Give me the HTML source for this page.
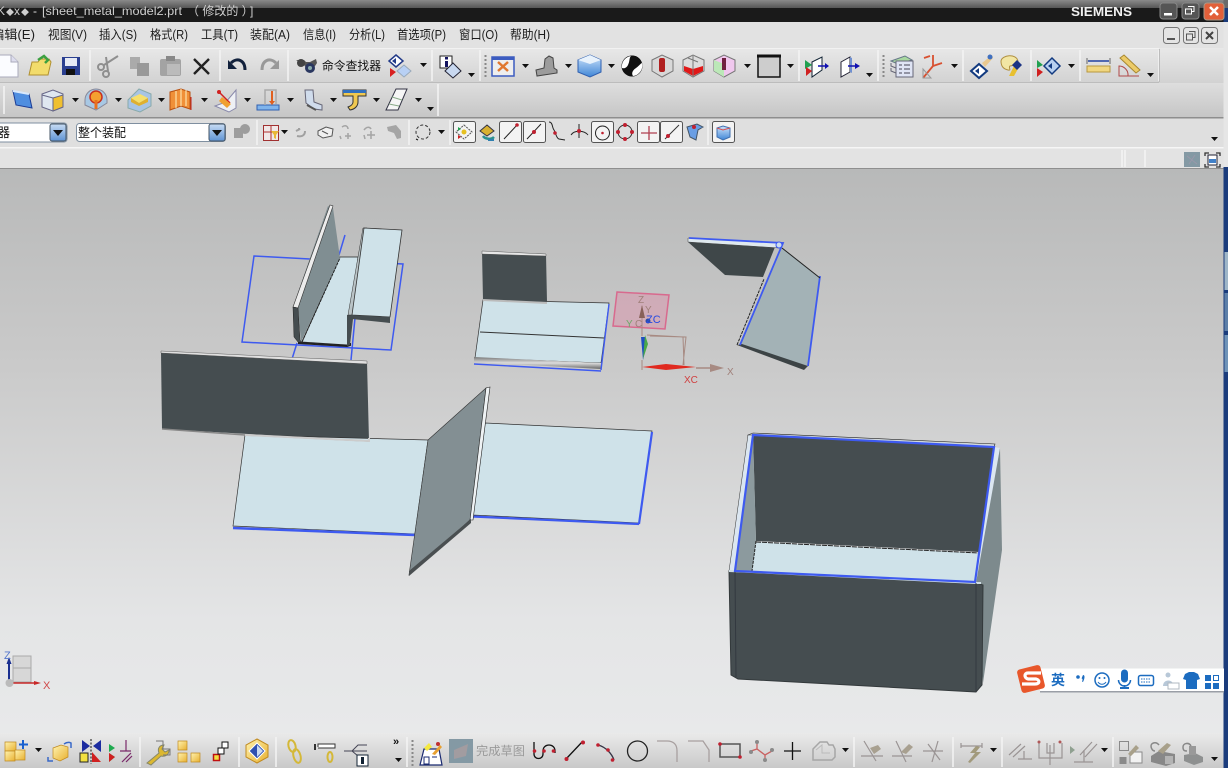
<!DOCTYPE html>
<html><head><meta charset="utf-8"><title>sheet_metal_model2.prt</title>
<style>
html,body{margin:0;padding:0;background:#ddd;overflow:hidden}
svg{display:block}
text{font-family:"Liberation Sans","Noto Sans CJK SC",sans-serif}
</style></head><body>
<svg xmlns="http://www.w3.org/2000/svg" width="1228" height="768" viewBox="0 0 1228 768">
<defs>
<linearGradient id="vp" x1="0" y1="0" x2="0" y2="1"><stop offset="0" stop-color="#b8b9b9"/><stop offset=".35" stop-color="#cacaca"/><stop offset=".8" stop-color="#e4e5e6"/><stop offset="1" stop-color="#e8e9ea"/></linearGradient>
<linearGradient id="tb" x1="0" y1="0" x2="0" y2="1"><stop offset="0" stop-color="#e8e8e8"/><stop offset="1" stop-color="#d2d2d2"/></linearGradient>
<linearGradient id="tb2" x1="0" y1="0" x2="0" y2="1"><stop offset="0" stop-color="#dedede"/><stop offset="1" stop-color="#c6c6c6"/></linearGradient>
<linearGradient id="top" x1="0" y1="0" x2="0" y2="1"><stop offset="0" stop-color="#8a8a8a"/><stop offset="1" stop-color="#565656"/></linearGradient>
<linearGradient id="bot" x1="0" y1="0" x2="0" y2="1"><stop offset="0" stop-color="#eaeaea"/><stop offset="1" stop-color="#c9c9c9"/></linearGradient>
<linearGradient id="blu" x1="0" y1="0" x2="0" y2="1"><stop offset="0" stop-color="#cfe4fb"/><stop offset="1" stop-color="#3f86d6"/></linearGradient>
<linearGradient id="yel" x1="0" y1="0" x2="1" y2="1"><stop offset="0" stop-color="#fff3b0"/><stop offset="1" stop-color="#e8b030"/></linearGradient>
<linearGradient id="band" x1="0" y1="0" x2="0" y2="1"><stop offset="0" stop-color="#777"/><stop offset=".5" stop-color="#ddd"/><stop offset="1" stop-color="#666"/></linearGradient>
<linearGradient id="dd" x1="0" y1="0" x2="0" y2="1"><stop offset="0" stop-color="#c8dcf4"/><stop offset="1" stop-color="#5f94d4"/></linearGradient>
<path id="a" d="M0 0h7l-3.5 4z" fill="#111"/>
<g id="btn"><rect x=".5" y=".5" width="22" height="21" rx="2" fill="#f3f3f3" stroke="#555"/></g>
</defs>

<!-- chrome backgrounds -->
<rect width="1228" height="768" fill="#e2e2e2"/>
<rect y="0" width="1228" height="8" fill="url(#top)"/>
<rect y="8" width="1228" height="14" fill="#1a1a1a"/>
<rect y="22" width="1228" height="26" fill="#e2e2e2"/>
<rect y="48" width="1228" height="35" fill="url(#tb)"/>
<rect y="83" width="1228" height="34" fill="url(#tb2)"/>
<rect y="117" width="1228" height="1.5" fill="#8e8e8e"/>
<rect y="118.500" width="1228" height="29" fill="#dfdfdf"/>
<rect y="147" width="1228" height="1.500" fill="#f6f6f6"/>
<rect y="148.500" width="1228" height="20" fill="#e3e3e3"/>
<rect y="168" width="1228" height="1.500" fill="#8f8f8f"/>
<rect y="169" width="1228" height="564" fill="url(#vp)"/>
<rect y="733" width="1228" height="35" fill="url(#bot)"/>
<!-- right desktop strip -->
<rect x="1223.500" y="0" width="4.500" height="768" fill="#1b3c7c"/>
<rect x="1223.500" y="0" width="4.500" height="8" fill="#6a6a6a"/>
<rect x="1223.500" y="22" width="4.500" height="145" fill="#e6e6e6"/>
<rect x="1224.500" y="252" width="3.500" height="38" fill="#9fb6c8"/>
<rect x="1224.500" y="293" width="3.500" height="38" fill="#5d7fa8"/>
<rect x="1224.500" y="335" width="3.500" height="37" fill="#6f93b8"/>

<!-- title -->
<g fill="#cfcfcf" font-size="12">
<text x="-3" y="15">K</text><text x="6" y="15" font-size="8">◆</text><text x="14" y="15">x</text><text x="21" y="15" font-size="8">◆</text>
<text x="33" y="15" fill="#e0e0e0">-</text>
<text x="42" y="15" textLength="140" lengthAdjust="spacingAndGlyphs">[sheet_metal_model2.prt</text>
<text x="187" y="15" font-size="12">（ 修改的 ）</text><text x="250" y="15">]</text>
</g>
<text x="1071" y="16" font-size="12.500" font-weight="bold" fill="#f0f0f0" textLength="61" lengthAdjust="spacingAndGlyphs">SIEMENS</text>
<!-- window buttons -->
<rect x="1160" y="3" width="17" height="16" rx="3" fill="#555" stroke="#888"/><rect x="1164" y="13" width="8" height="2.500" fill="#fff"/>
<rect x="1182" y="3" width="17" height="16" rx="3" fill="#555" stroke="#888"/><path d="M1188 6.500h6v5h-2M1185.500 9h6v5h-6z" fill="none" stroke="#fff"/>
<rect x="1204" y="3" width="20" height="17" rx="3" fill="#e2603a" stroke="#a98"/><path d="M1210 7l8 8M1218 7l-8 8" stroke="#fff" stroke-width="2.500"/>

<!-- menu -->
<g fill="#1c1c1c" font-size="12.500">
<text x="-9" y="39" textLength="44" lengthAdjust="spacingAndGlyphs">编辑(E)</text>
<text x="48" y="39" textLength="39" lengthAdjust="spacingAndGlyphs">视图(V)</text>
<text x="99" y="39" textLength="38" lengthAdjust="spacingAndGlyphs">插入(S)</text>
<text x="150" y="39" textLength="38" lengthAdjust="spacingAndGlyphs">格式(R)</text>
<text x="201" y="39" textLength="37" lengthAdjust="spacingAndGlyphs">工具(T)</text>
<text x="250" y="39" textLength="40" lengthAdjust="spacingAndGlyphs">装配(A)</text>
<text x="303" y="39" textLength="33" lengthAdjust="spacingAndGlyphs">信息(I)</text>
<text x="349" y="39" textLength="36" lengthAdjust="spacingAndGlyphs">分析(L)</text>
<text x="397" y="39" textLength="49" lengthAdjust="spacingAndGlyphs">首选项(P)</text>
<text x="459" y="39" textLength="39" lengthAdjust="spacingAndGlyphs">窗口(O)</text>
<text x="510" y="39" textLength="40" lengthAdjust="spacingAndGlyphs">帮助(H)</text>
</g>
<g fill="#e4e4e4" stroke="#777">
<rect x="1163.500" y="27.500" width="16" height="16" rx="3"/><rect x="1183.500" y="27.500" width="15" height="16" rx="3"/><rect x="1201.500" y="27.500" width="16" height="16" rx="3"/>
</g>
<rect x="1167" y="38" width="8" height="2" fill="#555"/>
<path d="M1189 31.500h6v6h-2M1186.500 34h6v6h-6z" fill="none" stroke="#555"/>
<path d="M1206 32l7 7M1213 32l-7 7" stroke="#444" stroke-width="2"/>

<!-- toolbar separators -->
<g stroke="#f4f4f4" stroke-width="1.500">
<path d="M90 50v31M220 50v31M288 50v31M432 50v31M480 50v31M799 50v31M878 50v31M963 50v31M1031 50v31M1080 50v31M1159 50v31M4 86v28M438 84v32M257 120v25M409 120v25M450 120v25M708 120v25M1122 150v17M1125 150v17M1145 150v17M140 737v30M239 737v30M276 737v30M407 737v30M854 737v30M953 737v30M1002 737v30M1113 737v30"/>
</g>
<rect y="48" width="1159" height="1" fill="#f2f2f2"/><rect y="82" width="1159" height="1" fill="#bcbcbc"/>
<rect x="1159" y="49" width="1" height="33" fill="#bcbcbc"/>
<path d="M485.500 55v22M883.500 55v22M412.500 740v26" stroke="#888" stroke-width="2" stroke-dasharray="2 2"/>

<!-- row 1 icons -->
<path d="M-2 55h13l7 7v15h-20z" fill="#fbfcff" stroke="#aab"/><path d="M11 55v7h7" fill="#dde" stroke="#aab"/>
<path d="M29 75l3-13h6l2-3h9l2 3-3 13z" fill="#f2dc6c" stroke="#b09030"/><path d="M38 60l6-4 4 4-3 3" fill="none" stroke="#3ca040" stroke-width="2.500"/>
<rect x="62" y="57" width="18" height="18" fill="#2a3f90"/><rect x="65" y="58" width="12" height="8" fill="#e6eaf4"/><rect x="66" y="69" width="9" height="6" fill="#111"/>
<g fill="none" stroke="#8f8f8f" stroke-width="2"><circle cx="101" cy="67" r="3"/><circle cx="106" cy="74" r="3"/><path d="M104 65l14-9M108 71l-2-14"/></g>
<path d="M130 57h10v12h-10z" fill="#aaa"/><path d="M137 63h12v13h-12z" fill="#999"/>
<rect x="160" y="59" width="21" height="17" rx="2" fill="#a3a3a3"/><rect x="166" y="56" width="9" height="5" fill="#888"/><rect x="167" y="64" width="13" height="11" fill="#bbb"/>
<path d="M194 59l15 15M209 59l-15 15" stroke="#222" stroke-width="2.400"/>
<path d="M231 63c6-6 14-3 14 7" fill="none" stroke="#12213c" stroke-width="3"/><path d="M228 60v9h9z" fill="#12213c"/>
<path d="M276 63c-6-6-14-3-14 7" fill="none" stroke="#999" stroke-width="3"/><path d="M279 60v9h-9z" fill="#999"/>
<g><path d="M296 60h8l2 2h4l6-3 1 4-4 6h-6l-3-4z" fill="#555"/><circle cx="301" cy="63" r="4" fill="#444"/><circle cx="310" cy="68" r="5" fill="#2a3760"/><circle cx="310" cy="68" r="2" fill="#8aa"/></g>
<text x="322" y="70" font-size="12" fill="#111" textLength="59" lengthAdjust="spacingAndGlyphs">命令查找器</text>
<path d="M396 55l7 6-7 6-7-6z" fill="#fff" stroke="#223a88" stroke-width="1.500"/><path d="M392 61l4-3v6z" fill="#223a88"/><path d="M404 65l7 6-7 6-7-6z" fill="#b8d0f4" stroke="#9ab"/><path d="M390 68l6 4-6 5z" fill="#d82020"/>
<use href="#a" x="420" y="63"/>
<rect x="440" y="56" width="12" height="12" fill="#fff" stroke="#222"/><rect x="445" y="57" width="3" height="2.500" fill="#151560"/><rect x="445" y="61" width="3" height="6" fill="#151560"/>
<path d="M453 63l8 8-8 7-8-7z" fill="#c8d8f0" stroke="#223"/>
<use href="#a" x="468" y="73"/>
<rect x="492" y="57" width="22" height="19" fill="#eee" stroke="#3c5cc0" stroke-width="1.500"/><rect x="492" y="57" width="22" height="3" fill="#3c5cc0"/><path d="M498 62l10 9M508 62l-10 9" stroke="#e07830" stroke-width="2.500"/>
<use href="#a" x="522" y="64"/>
<path d="M536 70l8-2 1-9 4-3 4 2 1 10 3 2v3l-20 3z" fill="#9c9c9c" stroke="#444"/>
<use href="#a" x="565" y="64"/>
<path d="M578 60l12-5 11 5v12l-11 5-12-5z" fill="url(#blu)" stroke="#3060b0"/><path d="M578 60l12 4 11-4-11-5z" fill="#e8f2fc"/>
<use href="#a" x="608" y="64"/>
<circle cx="632" cy="66" r="10.500" fill="#111"/><path d="M632 55.500a10.500 10.500 0 0 1 9.500 6c-3-1-5 1-8 3s-8 2-11 1a10.500 10.500 0 0 1 9.500-10z" fill="#111"/><path d="M642 63a10.500 10.500 0 0 1-9 13c-2-3 0-6 3-8s4-4 6-5zM622 68c3 1 5-1 6-3 2-4 1-7 3-9a10.500 10.500 0 0 0-9 12z" fill="#fff"/>
<g fill="#d8d8d8" stroke="#777"><path d="M652 60l10-5 11 5v11l-11 6-10-6z"/></g><rect x="659" y="58" width="6" height="14" rx="2" fill="#b02020"/>
<path d="M683 60l10-5 11 5v11l-11 6-10-6z" fill="#ddd" stroke="#777"/><path d="M684 66l9 3 10-3v5l-10 5-9-5z" fill="#e01818"/><path d="M693 56v20M688 58l10 4" stroke="#777" fill="none"/>
<path d="M714 60l10-5 11 5v11l-11 6-10-6z" fill="#f0c8ee" stroke="#777"/><path d="M714 60l10 4v13l-10-6z" fill="#bce8b8"/><rect x="722" y="58" width="4" height="12" fill="#702040"/>
<use href="#a" x="744" y="64"/>
<rect x="758" y="56" width="22" height="21" fill="#cdcdcd" stroke="#111" stroke-width="1.500"/><rect x="757" y="54.500" width="24" height="3" fill="#111"/>
<use href="#a" x="787" y="64"/>
<path d="M812 62l10-5v13l-10 7z" fill="#fff" stroke="#123"/><path d="M805 60l7 5-7 4z" fill="#20a050"/><path d="M806 67l6 4-6 5z" fill="#d02020"/><path d="M818 66h10" stroke="#1010b0" stroke-width="1.500"/><path d="M825 63l4 3-4 3z" fill="#1010b0"/>
<path d="M841 62l9-5v15l-9 5z" fill="#fff" stroke="#223"/><path d="M850 57l2 1v15l-2-1z" fill="#7090d0"/><path d="M848 66h10" stroke="#1010b0" stroke-width="1.500"/><path d="M855 63l5 3-5 3z" fill="#1010b0"/>
<use href="#a" x="866" y="73"/>
<path d="M891 61l14-5 7 4-14 4z" fill="#a8d8a0" stroke="#678"/><rect x="896" y="61" width="17" height="16" fill="#dfe4f4" stroke="#667"/><path d="M899 65h3M904 65h6M899 69h3M904 69h6M899 73h3M904 73h6" stroke="#445"/><path d="M891 63v3l5 2M891 68v3l5 2" fill="none" stroke="#667"/>
<path d="M933 66V55M933 66l9-3M933 66l-10 12M924 58l6-2" stroke="#d85030" stroke-width="1.800" fill="none"/><path d="M923 78v-9l8 9z" fill="none" stroke="#999"/>
<use href="#a" x="951" y="64"/>
<path d="M979 64l8 7-8 7-8-7z" fill="#fff" stroke="#123a80" stroke-width="2"/><path d="M975 71l4-3v6z" fill="#123a80"/><path d="M982 63l10-8 1 3-8 9z" fill="#e8c890"/><circle cx="990" cy="57" r="2.500" fill="#4070c0"/>
<path d="M1001 61c1-6 15-8 17 0l-3 4-5 1c-2 1 2 5-2 4s-7-3-7-9z" fill="#f2e6a4" stroke="#b09040"/><path d="M1009 76l5-10 5 1-5 9z" fill="#e8c030"/><path d="M1017 60l5 5-5 5-5-5z" fill="#1c3484"/>
<path d="M1037 60l6 5-6 3z" fill="#20a050"/><path d="M1037 68l6 4-6 5z" fill="#d02020"/><path d="M1052 58l8 8-8 8-8-8z" fill="#b8d0f0" stroke="#123a80" stroke-width="1.500"/><path d="M1048 66l4-3v6z" fill="#123a80"/>
<use href="#a" x="1068" y="64"/>
<rect x="1087" y="66" width="23" height="6" fill="#f0d680" stroke="#b89840"/><path d="M1088 61h21" stroke="#2040a0" stroke-width="1.500"/><path d="M1087 58v6M1110 58v6" stroke="#666"/>
<path d="M1119 76V66a9 9 0 0 1 9 10z" fill="none" stroke="#b04848"/><path d="M1119 76h20" stroke="#b04848"/><path d="M1120 58l4-3 16 15-4 3z" fill="#eccb68" stroke="#a88830"/>
<use href="#a" x="1147" y="73"/>

<!-- row 2 icons -->
<path d="M13 91l16 3 3 14-16-3z" fill="#4f8ee0" stroke="#1c3c94"/><path d="M13 91l16 3" stroke="#d8e8fc" stroke-width="2"/>
<path d="M42 94l11-4 10 4v13l-10 4-11-4z" fill="#dfe7f0" stroke="#668"/><path d="M53 98l10-3v12l-10 4z" fill="#f0c030" stroke="#668"/><path d="M42 95l11 3" stroke="#668"/>
<use href="#a" x="72" y="98"/>
<path d="M85 100a11 11 0 0 1 22 0v3l-11 7-11-5z" fill="#a8c8e4" stroke="#889"/><circle cx="96" cy="97" r="6" fill="#f4a030" stroke="#c83020" stroke-width="1.500"/><rect x="94.500" y="100" width="3" height="9" fill="#e87020"/>
<use href="#a" x="115" y="98"/>
<path d="M128 100l11-11 12 5v12l-11 6-12-4z" fill="#a8c4e4" stroke="#8aa"/><path d="M131 98l9-4 8 4-9 5z" fill="#f6e06c"/><path d="M131 98v4l8 4 9-4v-4l-9 5z" fill="#dfb030"/>
<use href="#a" x="158" y="98"/>
<path d="M170 92l11-3 9 3v17l-9-3-11 4z" fill="#f09038" stroke="#b85010"/><path d="M176 91v17M181 89v17M186 90v16" stroke="#fff2c0"/><path d="M191 97v13" stroke="#c02020"/>
<use href="#a" x="201" y="98"/>
<path d="M215 106l11-4 10-12v18l-7 4z" fill="#eef0f4" stroke="#88a"/><path d="M219 92l11 11" stroke="#d02020" stroke-width="1.500"/><path d="M222 97l9 7-4 4-8-7z" fill="#f0a030"/><circle cx="219" cy="92" r="2" fill="#d02020"/>
<use href="#a" x="244" y="98"/>
<rect x="257" y="105" width="22" height="5" fill="#7fb4ec" stroke="#3060b0"/><path d="M265 105V90h11v14" fill="none" stroke="#aaa" stroke-width="1.500"/><path d="M272 91v12" stroke="#e06020" stroke-width="2"/><path d="M269 101l3 4 3-4z" fill="#e06020"/>
<use href="#a" x="287" y="98"/>
<path d="M305 90h8l1 12 8 3v5l-8-1-8-6z" fill="#d0dcec" stroke="#667"/><path d="M307 105l9 5" stroke="#555" stroke-width="2"/>
<use href="#a" x="330" y="98"/>
<path d="M343 90h23v6h-8v6c0 3-2 7-8 8l-2-3c3-1 5-3 5-5v-6h-10z" fill="#f0c850" stroke="#333"/><rect x="343" y="90" width="23" height="3" fill="#3070c0"/>
<use href="#a" x="373" y="98"/>
<path d="M396 89h11l-9 21h-12z" fill="#f6f6f6" stroke="#334"/><path d="M392 97l10 3M389 104l10 2" stroke="#8a8" fill="none"/>
<use href="#a" x="415" y="98"/><use href="#a" x="427" y="107"/>

<!-- row 3 -->
<rect x="-6" y="123" width="73" height="19" rx="3" fill="#fff" stroke="#7f8fa0"/>
<text x="-3" y="137" font-size="13" fill="#111">器</text>
<rect x="50" y="124" width="16" height="17" rx="2" fill="url(#dd)" stroke="#456"/><path d="M53 130h10l-5 6z" fill="#111"/>
<rect x="76.500" y="123.500" width="149" height="18" rx="3" fill="#fff" stroke="#7f8fa0"/>
<text x="78" y="137" font-size="12.500" fill="#111" textLength="48" lengthAdjust="spacingAndGlyphs">整个装配</text>
<rect x="209" y="124" width="16" height="17" rx="2" fill="url(#dd)" stroke="#456"/><path d="M212 130h10l-5 6z" fill="#111"/>
<g fill="#9d9d9d"><rect x="234" y="128" width="9" height="10"/><circle cx="245" cy="129" r="5"/></g>
<rect x="263.500" y="125.500" width="15" height="15" fill="#f0e8e8" stroke="#a03030"/><path d="M271 125v15M263 132h15" stroke="#b03030"/><path d="M271 131h8l-3 4v4l-2-1v-3z" fill="#e8b838"/>
<use href="#a" x="281" y="130"/>
<path d="M296 131l4-2h-2M305 131c0 5-4 6-8 5" fill="none" stroke="#a0a0a0" stroke-width="2"/>
<path d="M318 131l8-4 7 2-1 7-9 2-5-3z" fill="#f0f0f0" stroke="#555"/><path d="M322 131l6 3" stroke="#555"/>
<g fill="none" stroke="#a4a4a4" stroke-width="1.500"><path d="M342 127c4-3 6 0 6 2M348 133v6M345 136h6M341 139l-1-3"/><path d="M364 130c3-4 6-3 7-1M371 131v8M367 135h8M364 135l1 4"/></g>
<path d="M387 127l9-2 5 6v7l-4 1-3-6-6-2z" fill="#a5a5a5"/>
<circle cx="423" cy="132" r="7" fill="none" stroke="#333" stroke-dasharray="3 2"/><path d="M416 139l2 1" stroke="#111"/>
<use href="#a" x="438" y="130"/>
<g transform="translate(453,121)"><use href="#btn"/></g>
<path d="M464 125l8 7-8 7-8-7z" fill="none" stroke="#555" stroke-dasharray="2 1"/><circle cx="464" cy="132" r="2.500" fill="#e6c020"/><path d="M458 127l3 2-3 2z" fill="#20a050"/><path d="M458 135l3 2-3 2z" fill="#d02020"/>
<path d="M487 125l7 6-7 5-7-5z" fill="#d8b030" stroke="#334"/><path d="M483 136c2 3 8 4 11 1" stroke="#2a9090" stroke-width="2.500" fill="none"/><path d="M488 140h6" stroke="#3080b0" stroke-width="2"/>
<g transform="translate(499,121)"><use href="#btn"/></g><path d="M504 139l14-15" stroke="#222"/><circle cx="517" cy="125" r="1.800" fill="#c02030"/>
<g transform="translate(523,121)"><use href="#btn"/></g><path d="M527 139l14-15" stroke="#222"/><circle cx="534" cy="132" r="2" fill="#c02030"/>
<path d="M549 122c4 0 3 6 5 8 2 3 2 8 5 9l6 1" fill="none" stroke="#222"/><circle cx="555" cy="133" r="1.800" fill="#c02030"/>
<path d="M571 135c3-5 13-5 17 0M579 124v14" fill="none" stroke="#222"/><circle cx="579" cy="131" r="2" fill="#c02030"/>
<g transform="translate(591,121)"><use href="#btn"/></g><circle cx="602.500" cy="133" r="7" fill="none" stroke="#222"/><circle cx="602.500" cy="133" r="1.300" fill="#c02030"/>
<circle cx="625" cy="132" r="7" fill="none" stroke="#333"/><g fill="#c02030"><circle cx="625" cy="125" r="2"/><circle cx="632" cy="132" r="2"/><circle cx="625" cy="139" r="2"/><circle cx="618" cy="132" r="2"/></g>
<g transform="translate(637,121)"><use href="#btn"/></g><path d="M641 133h16M649 126v14" stroke="#b04050" stroke-width="1.300"/>
<g transform="translate(660,121)"><use href="#btn"/></g><path d="M665 139l14-14" stroke="#333"/><circle cx="668" cy="136" r="2" fill="#c02030"/>
<path d="M687 127l10-3 6 3-5 3-2 10-6-3z" fill="#6a9ee4" stroke="#456"/><circle cx="694" cy="127" r="2" fill="#c02030"/>
<g transform="translate(712,121)"><use href="#btn"/></g><path d="M717 128l6-2 7 2v9l-7 3-6-3z" fill="url(#blu)" stroke="#4070b0"/><path d="M717 128l6 2 7-2" stroke="#d85050" fill="none"/>
<use href="#a" x="1211" y="137"/>
<rect x="1184" y="152" width="16" height="15" fill="#8499a4"/><path d="M1187 156l10 8M1195 155l-6 9" stroke="#99a" fill="none"/>
<path d="M1205 156v-3h4M1216 153h4v3M1220 164v3h-4M1209 167h-4v-3" stroke="#333" fill="none" stroke-width="1.300"/><rect x="1208" y="155" width="9" height="10" fill="#fff" stroke="#223"/><rect x="1209" y="159" width="7" height="4" fill="#4080c8"/>

<!-- 3D: U-channel, top-left -->
<g fill="none" stroke="#3e5af0" stroke-width="1.500">
<path d="M254 256L403 264 391 350 242 342z"/>
<path d="M345 235L339 255M297 343l-5 16M355 318l-4 42"/>
</g>
<path d="M340 257h18l-10 88-46-3z" fill="#cfe2e9" stroke="#222" stroke-width=".8"/>
<path d="M293 307L328 206l5 2 7 50-39 84-3-34z" fill="#808e92"/>
<path d="M293 307L330 205l3 1-35 102z" fill="#ececec" stroke="#333" stroke-width=".6"/>
<path d="M293 307l5 1 2 32 2 3-4-1-4-5z" fill="#454d50" stroke="#222" stroke-width=".5"/>
<path d="M302 342l38-84" stroke="#222" stroke-width="1" stroke-dasharray="3 1"/>
<path d="M298 343l49 3 3-1v-2" stroke="#222" stroke-width="2" fill="none"/>
<path d="M347 315h4l2 4-3 26-3 1z" fill="#454d50"/>
<path d="M348 315l15-87 4 0-15 87z" fill="#b9c3c6" stroke="#333" stroke-width=".5"/>
<path d="M364 228l38 2-12 87-38-2z" fill="#cfe2e9" stroke="#333" stroke-width=".8"/>
<path d="M351 315l39 2v6l-38-4z" fill="#454d50"/>

<!-- middle piece -->
<path d="M475 358l8-58 126 3-8 60z" fill="#cfe2e9" stroke="#333" stroke-width=".7"/>
<path d="M482 251l64 3 1 48-64-2z" fill="#454d50"/><path d="M482 251l64 3v2l-64-2z" fill="#e6e6e6" stroke="#444" stroke-width=".4"/>
<path d="M483 300l64 3" stroke="#bbb" stroke-width="2"/>
<path d="M480 332l124 6" stroke="#333"/>
<path d="M474 357l127 6v6l-127-7z" fill="url(#band)"/>
<path d="M474 364l127 7M609 304l-8 66" stroke="#3e5af0" stroke-width="1.400" fill="none"/>

<!-- top right piece -->
<path d="M688 242l87 5-12 30-38-2z" fill="#3f4749"/>
<path d="M688 238l95 5-3 5-92-6z" fill="#dfe9ee" stroke="#444" stroke-width=".5"/>
<path d="M782 248l38 30-12 88-68-21z" fill="#a3b2b6"/>
<path d="M737 345l5-1 66 22-4 4z" fill="#3c4345"/>
<path d="M737 345l27-66" stroke="#222" stroke-dasharray="3 1" fill="none"/>
<path d="M689 238l94 5-43 102M820 276l-12 90" fill="none" stroke="#3e5af0" stroke-width="1.800"/>
<circle cx="779" cy="245" r="3" fill="#cde" stroke="#3e5af0"/>
<path d="M782 248l38 30" stroke="#222"/>

<!-- WCS -->
<path d="M617 292l52 3-4 34-52-3z" fill="#d59eb0" fill-opacity=".65" stroke="#d86a8e" stroke-width="1.500"/>
<path d="M642 336v-30M647 335l36 2 1 28M650 336l36 1-3 28" fill="none" stroke="#a78a82"/>
<path d="M642 305l-3 13h6z" fill="#876058"/>
<path d="M641 337l4 0 1 10-3 13z" fill="#1f4fc0"/><path d="M645 335l3 9-5 15z" fill="#4aa84a"/>
<path d="M642 367l24-3 30 3-30 3z" fill="#e02a20"/>
<path d="M696 368h20" stroke="#a78a82" stroke-width="1.500"/><path d="M710 364l14 4-14 4z" fill="#a78a82"/>
<path d="M642 360v10" stroke="#a78a82"/><circle cx="648" cy="321" r="2.500" fill="#2a4ca8"/>
<g font-size="10"><text x="638" y="303" fill="#a0807a">Z</text><text x="645" y="313" fill="#a0807a">Y</text><text x="626" y="327" fill="#6ea868">Y</text><text x="635" y="327" fill="#a0807a">C</text><text x="646" y="323" fill="#2a4ce0" font-size="11">ZC</text><text x="727" y="375" fill="#a0807a">X</text><text x="684" y="383" fill="#d04040">XC</text></g>

<!-- flat plate with gray flange -->
<path d="M161 352l206 10 2 79-207-12z" fill="#454d50"/>
<path d="M161 351l206 10v3l-206-11z" fill="#e0e0e0" stroke="#444" stroke-width=".4"/>
<path d="M245 435l183 5-13 94-182-8z" fill="#cfe2e9" stroke="#333" stroke-width=".7"/>
<path d="M162 429l83 6 124 6" stroke="#888" stroke-width="1.500" fill="none"/>
<path d="M245 435l124 6v-3" fill="none" stroke="#ccc" stroke-width="2"/>
<path d="M233 528l182 7" stroke="#3e5af0" stroke-width="2.500"/>
<path d="M485 423l167 8-13 92-167-8z" fill="#cfe2e9" stroke="#333" stroke-width=".7"/>
<path d="M472 516.500l167 7.500M652 432l-13 92" stroke="#3e5af0" stroke-width="2.200" fill="none"/>
<path d="M428 440l58-52-15 131-62 56z" fill="#838f93" stroke="#333" stroke-width=".6"/>
<path d="M486 388l4-1-17 133h-3z" fill="#eef2f4" stroke="#222" stroke-width=".6"/>
<path d="M409 571l62-52v4l-62 53z" fill="#4a4f51"/>

<!-- box -->
<path d="M748 435l5-2 242 11-1 3-241-11z" fill="#d0d8dc" stroke="#222" stroke-width=".6"/>
<path d="M753 435l241 12-15 105-223-11z" fill="#454d50"/>
<path d="M750 440l3-5 3 106-3 30h-18z" fill="#8c9a9e"/>
<path d="M756 542l223 11-4 29-223-11z" fill="#cfe2e9"/>
<path d="M756 542l223 11" stroke="#222" stroke-dasharray="5 1"/>
<path d="M756 541l-4 30" stroke="#222" stroke-dasharray="3 1"/>
<path d="M748 435l5 0-18 136h-6z" fill="#dbe6f0" stroke="#333" stroke-width=".5"/>
<path d="M994 447l6 1-19 135-6-1z" fill="#dbe6f0"/>
<path d="M1000 448l2 102-19 133-7-100z" fill="#7d8a8d"/>
<path d="M729 571l247 12 7 2-1 100-6 7-238-13-7-4z" fill="#454d50" stroke="#33393b" stroke-width="1"/>
<path d="M729 571l23 1 224 11 5 0" stroke="#cfdde4" stroke-width="2" fill="none"/>
<path d="M976 583v109M735 572l1 105" stroke="#333940"/>
<path d="M753 435l241 12-19 135-240-11z" fill="none" stroke="#3e5af0" stroke-width="2.200"/>

<!-- triad -->
<path d="M13 656h18v26H13z" fill="#d7d7d7" stroke="#aaa"/><path d="M13 668h18" stroke="#aaa"/>
<path d="M9 682V662" stroke="#1a2f90" stroke-width="2"/><path d="M6.500 664L9 657l2.500 7z" fill="#1a2f90"/>
<path d="M11 683h26" stroke="#c82828" stroke-width="1.500"/><path d="M34 681l7 2-7 2z" fill="#c82828"/>
<circle cx="9.500" cy="683" r="4" fill="#bbb"/>
<text x="4" y="659" font-size="11" fill="#5577cc">Z</text><text x="43" y="689" font-size="11" fill="#d04848">X</text>

<!-- IME -->
<rect x="1040" y="668.500" width="184" height="23" fill="#fff"/>
<rect x="1040" y="691" width="184" height="1.500" fill="#9a9ea6"/>
<rect x="1019" y="667" width="24" height="24" rx="3" fill="#e8572b" transform="rotate(-14 1031 679)"/>
<path d="M1041 673h-13c-4 0-4 5 0 6h8c4 1 4 5-1 5h-13" fill="none" stroke="#fff" stroke-width="3.200"/>
<g fill="#1c6cc0">
<text x="1051" y="685" font-size="14" font-weight="bold">英</text>
<circle cx="1078" cy="677" r="1.800"/><path d="M1083 675c2 0 2 3 0 7l-1-.5c1-2 .5-3-.5-3z"/>
<path d="M1125 673a3.500 3.500 0 0 1 7 0v6a3.500 3.500 0 0 1-7 0z" transform="translate(-4,0)"/>
<rect x="1120" y="687" width="9" height="2"/>
<path d="M1190 674l4-2h5l4 2 2 5-3 1v9h-11v-9l-3-1z" transform="translate(-5,0)"/>
<rect x="1205" y="675" width="6" height="6"/><rect x="1205" y="683" width="6" height="6"/><rect x="1213" y="683" width="6" height="6"/>
</g>
<rect x="1213.500" y="675.500" width="5" height="5" fill="none" stroke="#1c6cc0"/>
<circle cx="1102" cy="680" r="7" fill="none" stroke="#1c6cc0" stroke-width="1.500"/><circle cx="1099.500" cy="678" r="1" fill="#1c6cc0"/><circle cx="1104.500" cy="678" r="1" fill="#1c6cc0"/><path d="M1098 682c2 3 6 3 8 0" fill="none" stroke="#1c6cc0"/>
<path d="M1119 680a6 6 0 0 0 12 0M1125 685v3" fill="none" stroke="#1c6cc0" stroke-width="1.500" transform="translate(-.5,0)"/>
<rect x="1138.500" y="675.500" width="15" height="10" rx="2" fill="#fff" stroke="#1c6cc0" stroke-width="1.500"/><path d="M1141 679h10M1141 682h10" stroke="#1c6cc0" stroke-dasharray="1.500 1"/>
<circle cx="1168" cy="675" r="2.500" fill="#b8c8d8"/><path d="M1163 686c0-7 9-7 10-2v2z" fill="#b8c8d8"/><rect x="1168" y="683" width="11" height="6" fill="#fff" stroke="#b0b8c0"/>

<!-- bottom icons -->
<g stroke="#c08a20" stroke-width=".7" fill="url(#yel)">
<path d="M5 742h11v9H5z"/><path d="M5 751h10v10H5z"/><path d="M15 750h10v10H15z"/>
</g>
<path d="M23 740v9M19 744.500h9" stroke="#1860d0" stroke-width="2"/>
<use href="#a" x="35" y="748"/>
<path d="M53 748l8-3 7 2v10l-8 4-7-3z" fill="url(#yel)" stroke="#c08a20" stroke-width=".7"/><path d="M64 744c3-2 5-2 7-1v5M48 757v4h5" fill="none" stroke="#3868c8" stroke-width="1.500"/>
<path d="M82 740l8 6-8 6zM101 740l-8 6 8 6z" fill="#1c2ca0"/><path d="M91 739v25" stroke="#111" stroke-dasharray="2 1.500"/>
<rect x="80" y="753" width="8" height="9" fill="#f2e040" stroke="#222"/><path d="M92 752l9 10h-9z" fill="#d02020"/>
<path d="M109 744l6 4-6 4zM109 753l6 4-6 5z" fill="#1faa50"/><path d="M109 753l6 4-6 5z" fill="#d02020"/>
<path d="M126 740v11M120 751h11M122 762l9-9M126 762l6-6" stroke="#7a2a6a" stroke-width="1.200"/>
<path d="M147 763l12-10c-2-5 1-8 5-8l-2 4 3 3 4-2c0 5-4 7-8 6l-10 9z" fill="#dcb830" stroke="#886"/><path d="M156 741h7v8h7v6h-7" fill="none" stroke="#777"/>
<g stroke="#c08a20" stroke-width=".7" fill="url(#yel)"><path d="M178 741h9v9h-9z"/><path d="M178 753h9v9h-9z"/><path d="M191 753h9v9h-9z"/></g>
<rect x="213.500" y="754.500" width="6" height="6" fill="#f2e040" stroke="#c01010" stroke-width="1.500"/><rect x="218" y="748" width="6" height="6" fill="#fff" stroke="#111"/><rect x="222" y="742" width="6" height="6" fill="#fff" stroke="#111"/>
<path d="M257 739l11 6v12l-11 6-11-6v-12z" fill="url(#yel)" stroke="#c08a20"/><path d="M257 743l8 8-8 8-8-8z" fill="#3050b0" stroke="#fff"/><path d="M257 745l6 6-6 6z" fill="#c8d8f0"/>
<g fill="none" stroke="#d4b838" stroke-width="2"><ellipse cx="292" cy="746" rx="3.500" ry="6" transform="rotate(-15 292 746)"/><ellipse cx="297" cy="756" rx="3.500" ry="7" transform="rotate(-15 297 756)"/><ellipse cx="330" cy="757" rx="2.500" ry="5"/></g>
<path d="M318 747v-3h17v4h-17" fill="#fff" stroke="#333"/><path d="M315 744v6" stroke="#333" stroke-width="2"/>
<path d="M344 751h8l6-6h9M352 751h15M352 751l6 5" stroke="#445" fill="none"/><rect x="357" y="755" width="11" height="11" fill="#fff" stroke="#123"/><rect x="361" y="757" width="3" height="7" fill="#123"/>
<text x="393" y="745" font-size="11" fill="#111" font-weight="bold">»</text><use href="#a" x="395" y="758"/>
<path d="M420 765l4-16h15l3 16z" fill="#fff" stroke="#1a2a70" stroke-width="1.200"/><path d="M424 757h5v7h-5zM432 757h5" stroke="#1a2a70" fill="none"/><path d="M424 748l5-5 3 4-5 4z" fill="#f4e840"/><path d="M432 754l8-9 2 2-7 8z" fill="#e8a030"/><circle cx="438" cy="744" r="2" fill="#c03030"/>
<rect x="449" y="739" width="24" height="24" fill="#8499a4"/><path d="M454 750l14-6-2 12-12 3z" fill="#a29ca0"/>
<text x="476" y="755" font-size="12" fill="#9a9a9a" textLength="49" lengthAdjust="spacingAndGlyphs">完成草图</text>
<path d="M534 742v12c0 6 9 6 9 0v-3c0-8 12-8 12 0v2" fill="none" stroke="#111" stroke-width="1.300"/><g fill="#c02030"><circle cx="534.500" cy="751" r="1.800"/><circle cx="544" cy="751" r="1.800"/><circle cx="553.500" cy="751" r="1.800"/></g>
<path d="M566 759l17-18" stroke="#111" stroke-width="1.300"/><circle cx="566.500" cy="759" r="2" fill="#c02030"/><circle cx="583" cy="742.500" r="2" fill="#c02030"/>
<path d="M598 745c8 2 14 9 16 15" fill="none" stroke="#334" stroke-width="1.300"/><g fill="#c02030"><circle cx="598" cy="745" r="1.800"/><circle cx="608" cy="750" r="1.800"/><circle cx="612.500" cy="760" r="1.800"/></g>
<circle cx="637.500" cy="751" r="10" fill="none" stroke="#222" stroke-width="1.300"/>
<path d="M657 741h10c7 0 10 4 10 10v11" fill="none" stroke="#a8a0a0" stroke-width="1.300"/>
<path d="M688 741h15l6 9v12" fill="none" stroke="#a8a0a0" stroke-width="1.300"/>
<rect x="720" y="744" width="20" height="13" fill="none" stroke="#555" stroke-width="1.500"/><circle cx="720" cy="744" r="1.800" fill="#c02030"/><circle cx="740" cy="757" r="1.800" fill="#c02030"/>
<path d="M751 751l6-2 8 6 7-4M757 741v8M765 755v5" stroke="#c96060" fill="none" stroke-width="1.300"/><g fill="#8a8a8a"><circle cx="757" cy="742" r="2"/><circle cx="751" cy="752" r="2"/><circle cx="772" cy="750" r="2"/><circle cx="765" cy="760" r="2"/></g>
<path d="M784 751h17M792.500 742v18" stroke="#111" stroke-width="1.300"/>
<path d="M813 749l7-7h7l2 3h4l2 4v8l-3 3h-19z" fill="none" stroke="#a6a6a6" stroke-width="1.500"/><path d="M816 750l6-5v8h8" fill="none" stroke="#bbb"/>
<use href="#a" x="842" y="748"/>
<g fill="none" stroke="#9a9494" stroke-width="1.200">
<path d="M861 756h22M864 741l12 20"/><path d="M892 756h20M896 741l10 21"/><path d="M923 751h20M938 741l-6 21M928 744l12 16"/>
<path d="M961 743v5M982 743v5M961 746h21"/>
<path d="M1009 755l12-11M1013 757l12-11M1024 751v8M1018 759h14"/>
<path d="M1039 743v15h23v-15M1047 743v10h7v-10M1050 745v20"/>
<path d="M1080 755l12-13M1085 757l12-13M1084 750v12M1074 762h19"/>
</g>
<path d="M870 748l8-3 3 4-7 5zM901 752l8-8 4 3-7 7z" fill="#a8a090"/>
<path d="M968 762l7-9h-5l6-7 4 1-4 5h5l-11 11z" fill="#a29a7c"/>
<use href="#a" x="990" y="748"/>
<circle cx="1039" cy="742" r="1.500" fill="#b05858"/><circle cx="1060" cy="742" r="1.500" fill="#b05858"/>
<path d="M1070 746l5 4-5 4z" fill="#8fa090"/>
<use href="#a" x="1101" y="748"/>
<rect x="1119.500" y="741.500" width="9" height="9" fill="none" stroke="#8a8a8a"/><rect x="1119.500" y="757" width="7" height="7" fill="#8a8a8a"/><rect x="1130" y="752" width="12" height="11" fill="#f2f2f2" stroke="#8a8a8a"/><path d="M1128 754l8-9 3 3-8 8z" fill="#a8a08a"/>
<path d="M1151 756l8-5 16 3v9l-9 3-15-4z" fill="#888"/><path d="M1158 751l9-8 4 2-8 9z" fill="#a8a08a"/><path d="M1159 745c-3-4-8-2-8 1s2 5 4 5" fill="none" stroke="#888" stroke-width="1.500"/><rect x="1165" y="756" width="8" height="8" fill="#b4b4b4"/>
<path d="M1184 755l11-2 8 4v5l-9 3-10-4z" fill="#8e9090"/><rect x="1189" y="746" width="7" height="9" fill="#999"/><path d="M1191 746c-2-4-8-3-8 1s2 4 4 4" fill="none" stroke="#888" stroke-width="1.500"/>
<use href="#a" x="1211" y="757"/>
</svg>
</body></html>
